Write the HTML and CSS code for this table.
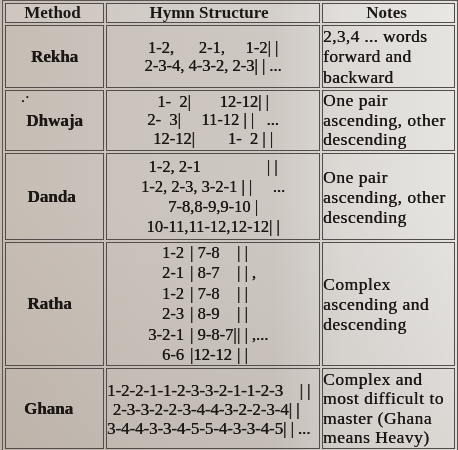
FILE: index.html
```html
<!DOCTYPE html>
<html>
<head>
<meta charset="utf-8">
<link rel="stylesheet" href="styles.css">
</head>
<body>
<table class="tbl">
  <tr class="row-head">
    <th class="c1">Method</th>
    <th class="c2">Hymn Structure</th>
    <th class="c3">Notes</th>
  </tr>
  <tr class="row-rekha">
    <td class="method">Rekha</td>
    <td class="hymn hymn-rekha"><div>1-2,      2-1,     1-2| |</div><div>2-3-4, 4-3-2, 2-3| | ...</div></td>
    <td class="notes notes-rekha">2,3,4 ... words forward and backward</td>
  </tr>
  <tr class="row-dhwaja">
    <td class="method method-dhwaja"><span class="dots">.·</span>Dhwaja</td>
    <td class="hymn hymn-dhwaja"><div>1-  2|       12-12| |</div><div>2-  3|     11-12 | |   ...</div><div>12-12|        1-  2 | |</div></td>
    <td class="notes notes-dhwaja">One pair ascending, other descending</td>
  </tr>
  <tr class="row-danda">
    <td class="method">Danda</td>
    <td class="hymn hymn-danda"><div>1-2, 2-1                | |</div><div>1-2, 2-3, 3-2-1 | |     ...</div><div>7-8,8-9,9-10 |</div><div>10-11,11-12,12-12| |</div></td>
    <td class="notes">One pair ascending, other descending</td>
  </tr>
  <tr class="row-ratha">
    <td class="method">Ratha</td>
    <td class="hymn-ratha"><div class="ratha-grid"><span class="ra">1-2</span><span class="rb">| 7-8</span><span class="rc">| |</span><span class="ra">2-1</span><span class="rb">| 8-7</span><span class="rc">| | ,</span><span class="ra">1-2</span><span class="rb">| 7-8</span><span class="rc">| |</span><span class="ra">2-3</span><span class="rb">| 8-9</span><span class="rc">| |</span><span class="ra">3-2-1</span><span class="rb">| 9-8-7|</span><span class="rc">| | ,...</span><span class="ra">6-6</span><span class="rb">|12-12</span><span class="rc">| |</span></div></td>
    <td class="notes">Complex ascending and descending</td>
  </tr>
  <tr class="row-ghana">
    <td class="method">Ghana</td>
    <td class="hymn hymn-ghana"><div>1-2-2-1-1-2-3-3-2-1-1-2-3    | |</div><div>2-3-3-2-2-3-4-4-3-2-2-3-4| |</div><div>3-4-4-3-3-4-5-5-4-3-3-4-5| | ...</div></td>
    <td class="notes notes-ghana">Complex and most difficult to master (Ghana means Heavy)</td>
  </tr>
</table>
</body>
</html>
```
FILE: styles.css
```css
html, body {
  margin: 0;
  padding: 0;
  width: 458px;
  height: 450px;
  overflow: hidden;
}
body {
  background:
    linear-gradient(to bottom, rgba(0,0,0,0) 45%, rgba(70,50,35,0.07) 100%),
    linear-gradient(90deg, #c6bdb4 0%, #cbc4bd 30%, #cec8c2 60%, #dcd9d5 75%, #e6e4e1 100%);
  font-family: "Liberation Serif", "Times New Roman", serif;
  color: #1b1715;
}
.tbl {
  margin: 0 0 0 2px;
  border: 1px solid #5b5653;
  border-collapse: separate;
  border-spacing: 2px;
  table-layout: fixed;
  width: 456px;
  will-change: transform;
}
.tbl th, .tbl td {
  border: 1px solid #524d4a;
  box-sizing: border-box;
  padding: 0;
  vertical-align: middle;
}
.tbl td {
  text-shadow: 0.35px 0 0 #1b1715;
}
.c1 { width: 99px; }
.c2 { width: 214px; }
.c3 { width: 133px; }
.row-head th {
  height: 20px;
  font-size: 17px;
  font-weight: bold;
  line-height: 18px;
  text-align: center;
  background: rgba(255,255,255,0.14);
}
.row-head .c1 { padding-right: 4px; }
.row-head .c2 { padding-right: 8px; }
.row-head .c3 { padding-right: 4px; }
.row-rekha td { height: 63px; }
.row-dhwaja td { height: 61px; }
.row-danda td { height: 87px; }
.row-ratha td { height: 124px; }
.row-ghana td { height: 81px; }

.method {
  font-weight: bold;
  font-size: 17px;
  text-align: center;
  padding-right: 2px;
}
.row-danda .method { padding-right: 6px; }
.row-ratha .method { padding-right: 10px; }
.row-ghana .method { padding-right: 12px; }
.method-dhwaja {
  position: relative;
  padding-right: 5px;
}
.dots {
  position: absolute;
  left: 15px;
  top: -2px;
  font-weight: normal;
  font-size: 15px;
}
.hymn {
  font-size: 16.5px;
  text-align: center;
  white-space: pre;
  padding-right: 6px;
}
.hymn-rekha { line-height: 18px; padding-top: 6px; }
.hymn-dhwaja { line-height: 18.5px; }
.hymn-danda { line-height: 20px; padding-top: 3px; }
.tbl .hymn-ghana {
  font-size: 17px;
  line-height: 19px;
  padding-right: 14px;
  letter-spacing: -0.1px;
  padding-top: 2px;
}
.tbl .hymn-ratha {
  font-size: 16.5px;
  line-height: 20.4px;
  padding-left: 27px;
  white-space: pre;
}
.ratha-grid {
  display: grid;
  grid-template-columns: 50px 45px 46px;
  column-gap: 4px;
}
.ra { text-align: right; }
.rb { padding-left: 2px; }
.notes {
  font-size: 17.5px;
  letter-spacing: 0.5px;
  line-height: 20px;
  padding-left: 1px;
  text-align: left;
}
.notes-rekha { line-height: 20.3px; letter-spacing: 0.3px; }
.notes-dhwaja { line-height: 19.5px; }
.notes-ghana { line-height: 19.5px; }
```
